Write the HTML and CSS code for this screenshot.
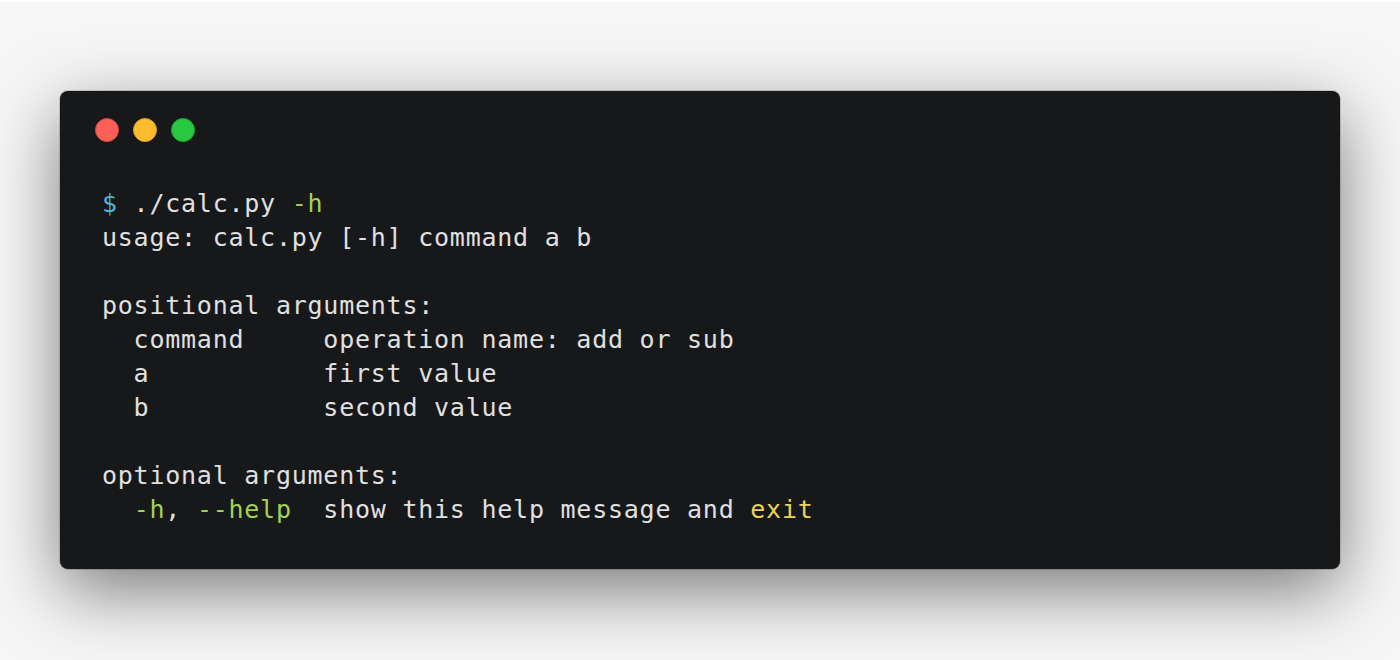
FILE: index.html
```html
<!DOCTYPE html>
<html>
<head>
<meta charset="utf-8">
<link rel="stylesheet" href="styles.css">
</head>
<body>
<div class="window">
  <div class="titlebar">
    <span class="dot red"></span>
    <span class="dot yellow"></span>
    <span class="dot green"></span>
  </div>
<pre class="term"><span class="prompt">$</span> ./calc.py <span class="flag">-h</span>
usage: calc.py [-h] command a b

positional arguments:
  command     operation name: add or sub
  a           first value
  b           second value

optional arguments:
  <span class="flag">-h</span>, <span class="flag">--help</span>  show this help message and <span class="kw">exit</span></pre>
</div>
</body>
</html>
```
FILE: styles.css
```css
html, body {
  margin: 0;
  padding: 0;
}
body {
  background: #f6f6f6;
  width: 1400px;
  height: 660px;
  overflow: hidden;
  padding-top: 91px;
  box-sizing: border-box;
  border-top: 2px solid #ffffff;
}
.window {
  margin: -2px 60px 0 60px;
  height: 478px;
  box-sizing: border-box;
  background: #17181a;
  border-radius: 8px;
  padding: 27px 0 0 35px;
  box-shadow: 0 22px 70px rgba(0, 0, 0, 0.5), 0 0 0 1px rgba(0,0,0,0.15);
}
.titlebar {
  display: flex;
  gap: 14px;
  height: 24px;
}
.dot {
  width: 24px;
  height: 24px;
  border-radius: 50%;
  box-sizing: border-box;
}
.red { background: #fe5f57; border: 1px solid #d0463f; }
.yellow { background: #febc2e; border: 1px solid #d49d22; }
.green { background: #28c840; border: 1px solid #1ea432; }
.term {
  margin: 45px 0 0 7px;
  font-family: "DejaVu Sans Mono", "Liberation Mono", monospace;
  font-size: 25px;
  letter-spacing: 0.76px;
  line-height: 34px;
  color: #e0e0e0;
}
.prompt { color: #4fb3d9; }
.flag { color: #a3d252; }
.kw { color: #e9d35c; }
```
